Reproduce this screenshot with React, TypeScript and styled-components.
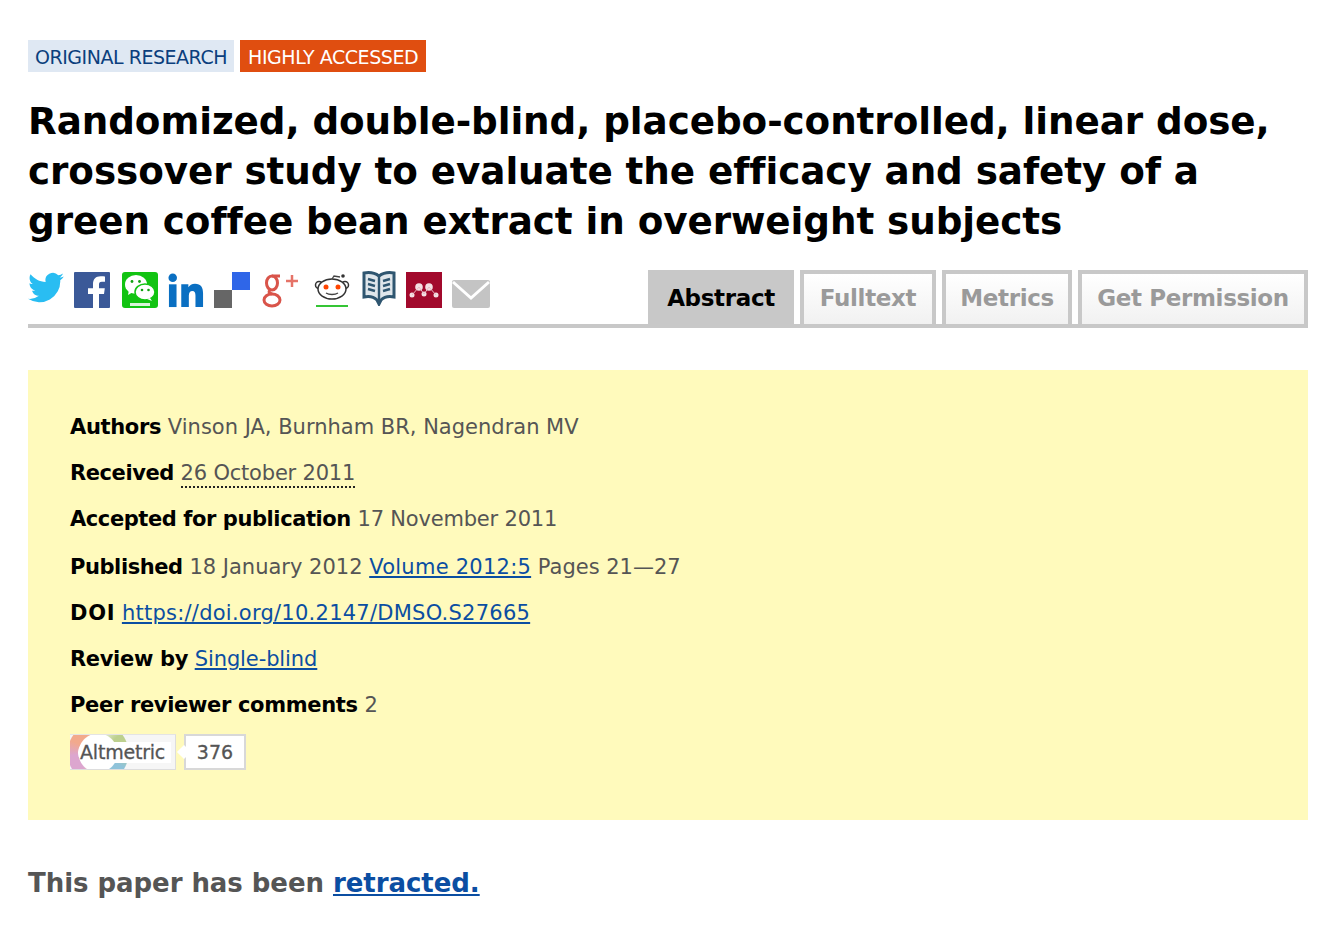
import React from 'react';
import styled, { createGlobalStyle } from 'styled-components';

const GlobalStyle = createGlobalStyle`
  html, body {
    margin: 0;
    padding: 0;
    background: #ffffff;
    font-family: 'DejaVu Sans', Verdana, sans-serif;
  }
`;

const Page = styled.div`
  width: 1280px;
  padding: 40px 30px 0 28px;
`;

const Badges = styled.div`
  display: flex;
  gap: 6px;
`;

const Badge = styled.span<{ $hot?: boolean }>`
  display: block;
  height: 32px;
  line-height: 34px;
  padding: 0 ${(props) => (props.$hot ? '8px' : '7px')};
  font-size: 19px;
  letter-spacing: ${(props) => (props.$hot ? '-0.42px' : '-0.47px')};
  white-space: nowrap;
  color: ${(props) => (props.$hot ? '#ffffff' : '#0b3f7d')};
  background: ${(props) => (props.$hot ? '#e04e10' : '#dfe8f3')};
`;

const Title = styled.h1`
  margin: 24px 0 0;
  font-size: 37.3px;
  line-height: 50px;
  font-weight: 700;
  letter-spacing: -0.07px;
  color: #000000;
`;

const ShareBar = styled.div`
  display: flex;
  justify-content: space-between;
  align-items: flex-start;
  margin-top: 24px;
  height: 54px;
  border-bottom: 4px solid #c8c8c8;
`;

const Icons = styled.div`
  display: flex;
  align-items: flex-end;
  height: 38px;
`;

const IconSlot = styled.span<{ $w: number; $lift?: number }>`
  display: block;
  width: ${(props) => props.$w}px;
  margin-bottom: ${(props) => props.$lift ?? 0}px;
  svg {
    display: block;
  }
`;

const Tabs = styled.div`
  display: flex;
  gap: 6px;
  height: 54px;
`;

const Tab = styled.a<{ $active?: boolean; $w: number }>`
  box-sizing: border-box;
  display: block;
  width: ${(props) => props.$w}px;
  height: 54px;
  line-height: 49px;
  text-align: center;
  font-size: 23px;
  font-weight: 700;
  letter-spacing: -0.35px;
  color: ${(props) => (props.$active ? '#000000' : '#9a9a9a')};
  background: ${(props) => (props.$active ? '#c8c8c8' : 'linear-gradient(#ffffff, #f1f1f1)')};
  border: 4px solid #c8c8c8;
  border-bottom: none;
`;

const InfoBox = styled.div`
  margin-top: 42px;
  height: 450px;
  box-sizing: border-box;
  padding: 43px 42px 0;
  background: #fffabc;
`;

const Row = styled.p<{ $gap?: number }>`
  margin: 0 0 ${(props) => props.$gap ?? 18}px;
  height: 28px;
  line-height: 28px;
  font-size: 21px;
  color: #555555;
  white-space: nowrap;
`;

const Label = styled.strong<{ $track?: number }>`
  color: #000000;
  font-weight: 700;
  letter-spacing: ${(props) => props.$track ?? -0.33}px;
`;

const DateText = styled.span`
  letter-spacing: -0.2px;
`;

const Dotted = styled(DateText)`
  border-bottom: 2px dotted #222222;
  padding-bottom: 1px;
`;

const TextLink = styled.a`
  color: #0b4ea2;
  text-decoration: underline;
`;

const RowLink = styled(TextLink)<{ $tight?: boolean }>`
  letter-spacing: ${(props) => (props.$tight ? '-0.1px' : '0.25px')};
`;

const Altmetric = styled.div`
  display: flex;
  align-items: stretch;
  gap: 8px;
  width: 176px;
  height: 36px;
  margin-top: -3px;
`;

const AltLabel = styled.div`
  position: relative;
  box-sizing: border-box;
  width: 106px;
  height: 36px;
  overflow: hidden;
  background:
    radial-gradient(circle at 28px 18px, #ffffff 0 19px, transparent 20px 30px, #f6f6f6 31px),
    conic-gradient(from 0deg at 28px 18px, #ffffff 0deg, #bdd08e 50deg, #bdd08e 80deg, #8fc3da 120deg, #8fc3da 155deg, #e6dc9a 185deg, #dca6cf 225deg, #dca6cf 265deg, #f2a98c 295deg, #f2a98c 335deg, #ffffff 360deg);
  border-top: 1px solid #e4e4e4;
  border-right: 1px solid #dddddd;
  border-bottom: 1px solid #dddddd;
`;

const AltText = styled.span`
  position: absolute;
  left: 8px;
  top: 7px;
  right: 4px;
  height: 21px;
  line-height: 21px;
  padding-left: 2px;
  font-size: 19px;
  letter-spacing: -0.2px;
  color: #555555;
  -webkit-text-stroke: 0.3px #555555;
  background: #ffffff;
  border-radius: 10px 0 0 10px;
`;

const AltCount = styled.div`
  position: relative;
  box-sizing: border-box;
  width: 62px;
  height: 36px;
  line-height: 33px;
  text-align: center;
  font-size: 19px;
  color: #555555;
  -webkit-text-stroke: 0.3px #555555;
  background: #ffffff;
  border: 2px solid #d8d8d8;

  &::before {
    content: '';
    position: absolute;
    left: -7px;
    top: 11px;
    width: 10px;
    height: 10px;
    background: #ffffff;
    transform: rotate(45deg);
  }
`;

const Retraction = styled.p`
  margin: 47px 0 0;
  line-height: 32px;
  font-size: 26px;
  font-weight: 700;
  letter-spacing: -0.05px;
  color: #555555;
`;

const Twitter = () => (
  <svg width="36" height="34" viewBox="0 0 24 22">
    <path fill="#29bdf2" d="M23.900 2.600c-.9.400-1.800.7-2.800.8 1-.6 1.800-1.600 2.200-2.700-1 .6-2 1-3.100 1.200A4.900 4.900 0 0 0 11.800 6.400C7.700 6.200 4.100 4.200 1.700 1.200c-1.300 2.200-.6 5.100 1.500 6.500-.8 0-1.600-.2-2.200-.6 0 2.300 1.600 4.400 3.900 4.900-.7.200-1.500.2-2.200.1.600 2 2.400 3.400 4.600 3.400A9.900 9.900 0 0 1 0 17.500 13.900 13.900 0 0 0 21.500 5.100c1-.7 1.800-1.500 2.400-2.500z" />
  </svg>
);

const Facebook = () => (
  <svg width="36" height="36" viewBox="0 0 36 36">
    <rect width="36" height="36" rx="1" fill="#3b5998" />
    <path fill="#ffffff" d="M25 36V22h5l.8-5.800H25v-3.700c0-1.700.5-2.800 2.900-2.800H31V4.500c-.5-.1-2.400-.2-4.500-.2-4.500 0-7.500 2.700-7.500 7.700v4.200h-5V22h5v14z" />
  </svg>
);

const WeChat = () => (
  <svg width="36" height="36" viewBox="0 0 36 36">
    <rect width="36" height="36" rx="3" fill="#12c312" />
    <ellipse cx="14" cy="12.500" rx="11" ry="9.500" fill="#ffffff" />
    <path fill="#ffffff" d="M7 18l-1 5 5-3z" />
    <ellipse cx="23" cy="20" rx="10" ry="8" fill="#ffffff" stroke="#12c312" strokeWidth="1.500" />
    <path fill="#ffffff" d="M28 26l2 3-5-2z" />
    <circle cx="10" cy="9.500" r="1.400" fill="#12a012" />
    <circle cx="17.500" cy="9.500" r="1.400" fill="#12a012" />
    <circle cx="20" cy="18" r="1.300" fill="#12a012" />
    <circle cx="26.500" cy="18" r="1.300" fill="#12a012" />
    <rect x="8" y="31" width="20" height="3" fill="#d9f5d9" />
  </svg>
);

const LinkedIn = () => (
  <svg width="36" height="36" viewBox="0 0 38 36">
    <circle cx="5" cy="5" r="4.500" fill="#0a6fc2" />
    <rect x="1" y="12" width="8" height="24" fill="#0a6fc2" />
    <path fill="#0a6fc2" d="M14 12h7.500v3.200c1.200-2.100 3.700-3.800 7-3.800 6.300 0 8.500 3.900 8.500 10V36h-8V24c0-2.900-.8-4.900-3.300-4.900S22 21 22 24v12h-8z" />
  </svg>
);

const Delicious = () => (
  <svg width="36" height="36" viewBox="0 0 36 36">
    <rect x="18" y="0" width="18" height="18" fill="#2f66e8" />
    <rect x="0" y="18" width="18" height="18" fill="#666666" />
  </svg>
);

const GooglePlus = () => (
  <svg width="38" height="34" viewBox="0 0 38 34">
    <g fill="none" stroke="#d9544a" strokeWidth="3">
      <ellipse cx="10" cy="9" rx="5.500" ry="7" />
      <ellipse cx="10" cy="26" rx="8" ry="6" />
      <path d="M8 16c-2 2-1 3 2 4" />
      <path d="M10 2h8" />
    </g>
    <path stroke="#e57368" strokeWidth="2.500" d="M24 7h12M30 1v12" />
  </svg>
);

const Reddit = () => (
  <svg width="36" height="34" viewBox="0 0 36 34">
    <circle cx="5" cy="11" r="3.500" fill="#ffffff" stroke="#333333" strokeWidth="1.500" />
    <circle cx="31" cy="11" r="3.500" fill="#ffffff" stroke="#333333" strokeWidth="1.500" />
    <ellipse cx="18" cy="15" rx="14" ry="10" fill="#ffffff" stroke="#333333" strokeWidth="1.500" />
    <circle cx="12" cy="13" r="2.500" fill="#ff4500" />
    <circle cx="24" cy="13" r="2.500" fill="#ff4500" />
    <path fill="none" stroke="#444444" strokeWidth="1.300" d="M12 19c3 2 9 2 12 0M18 5l2-3 6 1" />
    <circle cx="29" cy="2" r="1.800" fill="#333333" />
    <rect x="2" y="31" width="32" height="2" fill="#35c535" />
  </svg>
);

const Book = () => (
  <svg width="34" height="36" viewBox="0 0 34 36">
    <path fill="#dfe6eb" stroke="#2f5670" strokeWidth="3" d="M2 3c5-1 11 0 15 3 4-3 10-4 15-3v24c-5-1-10 0-13 3l-2 4-2-4c-3-3-8-4-13-3z" />
    <path stroke="#2f5670" strokeWidth="2.400" d="M17 6v26M6 9l7 2M6 14l7 2M6 19l7 2M28 9l-7 2M28 14l-7 2M28 19l-7 2" />
  </svg>
);

const Mendeley = () => (
  <svg width="36" height="36" viewBox="0 0 36 36">
    <rect width="36" height="36" fill="#a2092c" />
    <g fill="#f3dfe2">
      <circle cx="13" cy="15" r="3.800" />
      <circle cx="23" cy="15" r="3.800" />
      <circle cx="18" cy="22" r="2.500" />
      <circle cx="6" cy="23" r="2.500" />
      <circle cx="30" cy="23" r="2.500" />
    </g>
    <path stroke="#e8b9c3" strokeWidth="1" fill="none" d="M6 23l7-8 5 7 5-7 7 8" />
  </svg>
);

const Mail = () => (
  <svg width="38" height="28" viewBox="0 0 38 28">
    <rect width="38" height="28" rx="2" fill="#c4c4c4" />
    <path fill="none" stroke="#ffffff" strokeWidth="3" d="M1 2l18 16L37 2" />
  </svg>
);

const App: React.FC = () => {
  return (
    <Page>
      <GlobalStyle />
      <Badges>
        <Badge>ORIGINAL RESEARCH</Badge>
        <Badge $hot>HIGHLY ACCESSED</Badge>
      </Badges>
      <Title>
        Randomized, double-blind, placebo-controlled, linear dose, crossover study to evaluate the efficacy and safety
        of a green coffee bean extract in overweight subjects
      </Title>
      <ShareBar>
        <Icons>
          <IconSlot $w={46} $lift={2}><Twitter /></IconSlot>
          <IconSlot $w={48}><Facebook /></IconSlot>
          <IconSlot $w={46}><WeChat /></IconSlot>
          <IconSlot $w={46}><LinkedIn /></IconSlot>
          <IconSlot $w={48}><Delicious /></IconSlot>
          <IconSlot $w={52}><GooglePlus /></IconSlot>
          <IconSlot $w={48}><Reddit /></IconSlot>
          <IconSlot $w={44} $lift={2}><Book /></IconSlot>
          <IconSlot $w={46}><Mendeley /></IconSlot>
          <IconSlot $w={38}><Mail /></IconSlot>
        </Icons>
        <Tabs>
          <Tab $active $w={146}>Abstract</Tab>
          <Tab $w={136}>Fulltext</Tab>
          <Tab $w={130}>Metrics</Tab>
          <Tab $w={230}>Get Permission</Tab>
        </Tabs>
      </ShareBar>
      <InfoBox>
        <Row><Label>Authors</Label> Vinson JA, Burnham BR, Nagendran MV</Row>
        <Row><Label $track={-0.42}>Received</Label> <Dotted>26 October 2011</Dotted></Row>
        <Row $gap={20}><Label $track={-0.42}>Accepted for publication</Label> <DateText>17 November 2011</DateText></Row>
        <Row><Label $track={-0.42}>Published</Label> 18 January 2012 <RowLink href="#">Volume 2012:5</RowLink> Pages 21—27</Row>
        <Row><Label $track={0.7}>DOI</Label> <RowLink href="#">https://doi.org/10.2147/DMSO.S27665</RowLink></Row>
        <Row><Label>Review by</Label> <RowLink $tight href="#">Single-blind</RowLink></Row>
        <Row><Label>Peer reviewer comments</Label> 2</Row>
        <Altmetric>
          <AltLabel><AltText>Altmetric</AltText></AltLabel>
          <AltCount>376</AltCount>
        </Altmetric>
      </InfoBox>
      <Retraction>This paper has been <TextLink href="#">retracted.</TextLink></Retraction>
    </Page>
  );
};

export default App;
